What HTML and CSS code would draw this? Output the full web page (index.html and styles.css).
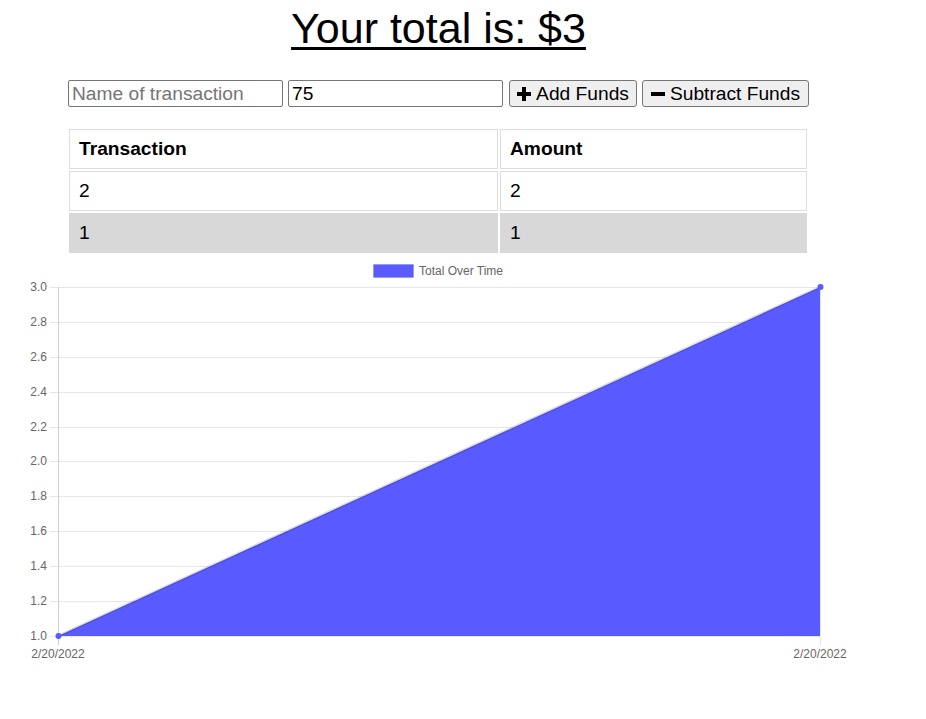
FILE: index.html
```html
<!DOCTYPE html>
<html lang="en">
<head>
<meta charset="UTF-8" />
<meta name="viewport" content="width=device-width, initial-scale=1" />
<title>Budget Tracker</title>
<link rel="stylesheet" href="styles.css">
</head>
<body>
<div class="wrap">

<h1 class="total">Your total is: $<span id="total">3</span></h1>

<div class="form">
  <input type="text" id="t-name" placeholder="Name of transaction" />
  <input type="number" id="t-amount" value="75" />
  <button id="add-btn"><svg class="icon" viewBox="0 0 14 14"><path d="M5 0h4v5h5v4H9v5H5V9H0V5h5z"/></svg>Add Funds</button>
  <button id="sub-btn"><svg class="icon" viewBox="0 0 14 14"><path d="M0 5h14v4H0z"/></svg>Subtract Funds</button>
</div>

<table>
  <thead>
    <tr><th class="col-name">Transaction</th><th>Amount</th></tr>
  </thead>
  <tbody id="tbody">
    <tr><td>2</td><td>2</td></tr>
    <tr><td>1</td><td>1</td></tr>
  </tbody>
</table>

<svg class="chart" width="877" height="420" viewBox="0 0 877 420">
  <!-- legend -->
  <rect x="373.5" y="6.5" width="40" height="13" fill="#595bff" stroke="rgba(0,0,0,0.1)"/>
  <text class="lbl" x="419" y="17">Total Over Time</text>

  <!-- grid -->
  <g stroke="#e6e6e6" stroke-width="1">
    <line x1="50" y1="29.5" x2="820" y2="29.5"/>
    <line x1="50" y1="64.5" x2="820" y2="64.5"/>
    <line x1="50" y1="99.5" x2="820" y2="99.5"/>
    <line x1="50" y1="134.5" x2="820" y2="134.5"/>
    <line x1="50" y1="169.5" x2="820" y2="169.5"/>
    <line x1="50" y1="203.5" x2="820" y2="203.5"/>
    <line x1="50" y1="238.5" x2="820" y2="238.5"/>
    <line x1="50" y1="273.5" x2="820" y2="273.5"/>
    <line x1="50" y1="308.5" x2="820" y2="308.5"/>
    <line x1="50" y1="343.5" x2="820" y2="343.5"/>
    <line x1="50" y1="378.5" x2="820" y2="378.5"/>
    <line x1="820.5" y1="29" x2="820.5" y2="387"/>
  </g>
  <line x1="58.5" y1="29" x2="58.5" y2="387" stroke="#d0d0d0"/>

  <!-- y labels -->
  <g class="lbl" text-anchor="end">
    <text x="47" y="33">3.0</text>
    <text x="47" y="68">2.8</text>
    <text x="47" y="103">2.6</text>
    <text x="47" y="138">2.4</text>
    <text x="47" y="173">2.2</text>
    <text x="47" y="207">2.0</text>
    <text x="47" y="242">1.8</text>
    <text x="47" y="277">1.6</text>
    <text x="47" y="312">1.4</text>
    <text x="47" y="347">1.2</text>
    <text x="47" y="382">1.0</text>
  </g>

  <!-- data -->
  <polygon points="58,378 820,29 820,378" fill="#595bff"/>
  <line x1="58" y1="378" x2="820" y2="29" stroke="rgba(0,0,0,0.12)" stroke-width="3"/>
  <circle cx="58.5" cy="378" r="3" fill="#595bff"/>
  <circle cx="820.5" cy="29" r="3" fill="#595bff"/>

  <!-- x labels -->
  <g class="lbl" text-anchor="middle">
    <text x="58" y="400">2/20/2022</text>
    <text x="820" y="400">2/20/2022</text>
  </g>
</svg>

</div>
</body>
</html>
```

FILE: styles.css
```css
body {
  margin: 0;
  font-family: "Liberation Sans", Arial, sans-serif;
  color: #000;
  background: #fff;
}
.wrap {
  width: 877px;
}
.total {
  font-size: 43px;
  font-weight: normal;
  text-align: center;
  text-decoration: underline;
  text-decoration-thickness: 3px;
  text-underline-offset: 4px;
  line-height: 49px;
  margin: 4px 0 27px;
}
.form {
  display: flex;
  gap: 5px;
  margin-left: 68px;
  height: 27px;
}
.form input {
  box-sizing: border-box;
  width: 215px;
  height: 27px;
  font-family: inherit;
  font-size: 19.2px;
  padding: 0 3px;
  border: 1px solid #767676;
  border-radius: 2px;
  margin: 0;
}
.form input::placeholder {
  color: #757575;
}
.form input[type=number] {
  -moz-appearance: textfield;
}
.form input::-webkit-inner-spin-button {
  -webkit-appearance: none;
}
.form button {
  box-sizing: border-box;
  height: 27px;
  display: flex;
  align-items: center;
  justify-content: center;
  white-space: nowrap;
  font-family: inherit;
  font-size: 19.2px;
  padding: 0 4px;
  background: #efefef;
  border: 1px solid #767676;
  border-radius: 3px;
  margin: 0;
  color: #000;
}
#add-btn {
  width: 128px;
  margin-left: 1px;
}
#sub-btn {
  width: 167px;
}
.icon {
  flex: none;
  width: 14px;
  height: 14px;
  margin: 0 5px 0 0;
  fill: #000;
}
table {
  width: 742px;
  margin: 20px 0 0 67px;
  border-spacing: 2px;
}
th, td {
  border: 1px solid #ddd;
  padding: 8px 9px;
  font-size: 19.2px;
  line-height: 22px;
  text-align: left;
}
.col-name {
  width: 409px;
}
tbody tr:nth-child(even) td {
  background: #d8d8d8;
  border-color: #d8d8d8;
}
.chart {
  display: block;
  margin-top: 3px;
}
.lbl {
  font-family: "Liberation Sans", Arial, sans-serif;
  font-size: 12px;
  fill: #666;
}
```
